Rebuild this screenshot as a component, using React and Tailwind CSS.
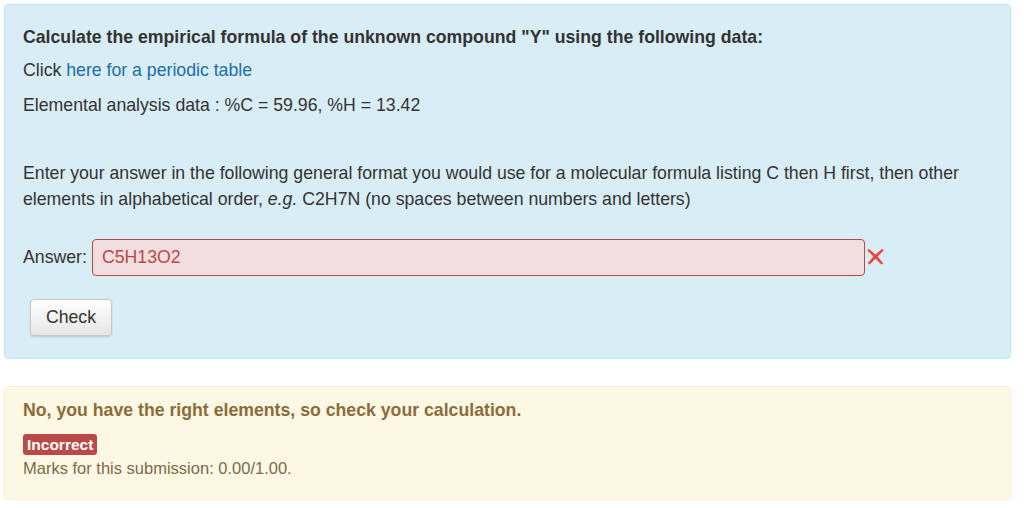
import React from 'react';

const CrossIcon = () => (
    <svg width="17" height="17" viewBox="0 0 20 20" className="shrink-0 ml-[2px] -mt-[2px]">
        <path d="M2 1 L10 7.5 L18 1 L19.5 3 L12.5 10 L19 18 L17 19.5 L10 12.5 L3 19.5 L1 17.5 L7.5 10 L0.5 3 Z" fill="#f0413c" />
    </svg>
);

const App = () => {
    return (
        <div className="w-[1024px] h-[508px] bg-white text-[17.7px] text-[#333] font-['Liberation_Sans',Arial,sans-serif] pt-[4px] pl-[4px] pr-[13px]">
            {/* Question panel */}
            <div className="bg-[#d9edf7] border border-[#bce8f1] rounded-[4px] pl-[18px] pr-[18px] pt-[20px] pb-[22px]">
                <div className="font-bold leading-[24px]">
                    Calculate the empirical formula of the unknown compound "Y" using the following data:
                </div>
                <div className="leading-[24px] mt-[9px]">
                    Click <a href="#" className="text-[#1a6fa5]">here for a periodic table</a>
                </div>
                <div className="leading-[24px] mt-[11px]">
                    Elemental analysis data : %C = 59.96, %H = 13.42
                </div>
                <div className="leading-[26px] mt-[43px]">
                    Enter your answer in the following general format you would use for a molecular formula listing C then H first, then other elements in alphabetical order, <i>e.g.</i> C2H7N (no spaces between numbers and letters)
                </div>
                <div className="flex items-center mt-[27px]">
                    <span className="mr-[5px]">Answer:</span>
                    <div className="w-[773px] h-[37px] bg-[#f2dede] border border-[#b94a48] rounded-[4px] px-[9px] flex items-center text-[#b94a48]">
                        C5H13O2
                    </div>
                    <CrossIcon />
                </div>
                <div className="mt-[23px] pl-[7px]">
                    <button className="h-[37px] w-[82px] rounded-[4px] border border-[#c8c8c8] bg-gradient-to-b from-white to-[#e6e6e6] shadow-[0_1px_2px_rgba(0,0,0,0.15)] text-[#333]">
                        Check
                    </button>
                </div>
            </div>

            {/* Feedback panel */}
            <div className="mt-[27px] bg-[#fcf8e3] border border-[#fbeed5] rounded-[4px] pl-[18px] pr-[18px] pt-[11px] pb-[20px] text-[#8a6d3b]">
                <div className="font-bold leading-[24px]">
                    No, you have the right elements, so check your calculation.
                </div>
                <div className="mt-[12px] flex">
                    <span className="bg-[#b94a48] text-white font-bold text-[15.5px] leading-[21px] px-[4px] rounded-[3px]">
                        Incorrect
                    </span>
                </div>
                <div className="leading-[22px] mt-[2px] text-[16.5px] text-[#7d6a4a]">
                    Marks for this submission: 0.00/1.00.
                </div>
            </div>
        </div>
    );
};

export default App;
